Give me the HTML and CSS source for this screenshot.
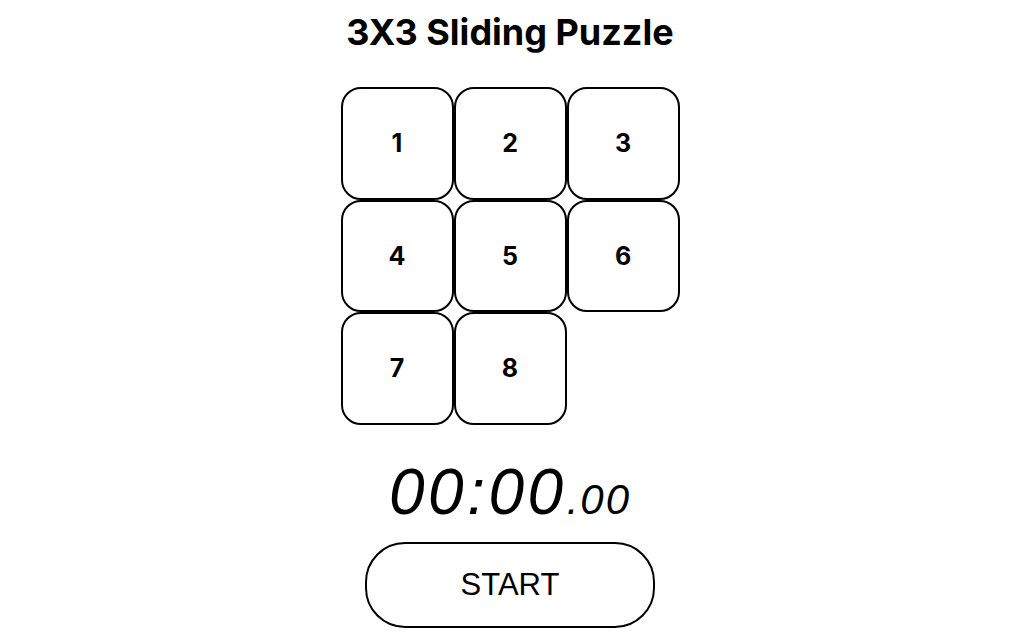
FILE: index.html
```html
<!DOCTYPE html>
<html lang="en">
<head>
<meta charset="utf-8">
<title>3X3 Sliding Puzzle</title>
<link rel="stylesheet" href="styles.css">
</head>
<body>
<main class="app">
  <h1 class="title">3X3 Sliding Puzzle</h1>
  <div class="board">
    <div class="tile">1</div>
    <div class="tile">2</div>
    <div class="tile">3</div>
    <div class="tile">4</div>
    <div class="tile">5</div>
    <div class="tile">6</div>
    <div class="tile">7</div>
    <div class="tile">8</div>
    <div class="slot"></div>
  </div>
  <div class="timer"><span class="timer-main">00:00</span><span class="timer-frac">.00</span></div>
  <button class="start-btn" type="button">START</button>
</main>
</body>
</html>
```

FILE: styles.css
```css
html, body {
  margin: 0;
  padding: 0;
  background: #fff;
  color: #000;
}

.app {
  display: flex;
  flex-direction: column;
  align-items: center;
  padding-top: 8px;
}

.title {
  margin: 0;
  font-family: Inter, "Liberation Sans", sans-serif;
  font-weight: 700;
  font-size: 36px;
  line-height: 48px;
  letter-spacing: 0;
}

.board {
  margin-top: 31px;
  display: grid;
  grid-template-columns: repeat(3, 113px);
  grid-template-rows: repeat(3, 112.5px);
}

.tile {
  box-sizing: border-box;
  border: 2px solid #000;
  border-radius: 20px;
  display: flex;
  align-items: center;
  justify-content: center;
  font-family: Inter, "Liberation Sans", sans-serif;
  font-weight: 700;
  font-size: 25px;
  background: #fff;
}

.timer {
  margin-top: 35px;
  height: 64px;
  font-family: "Liberation Sans", Arial, sans-serif;
  font-style: italic;
  line-height: 64px;
}

.timer-main {
  font-size: 64px;
  letter-spacing: 3.5px;
}

.timer-frac {
  font-size: 42px;
  letter-spacing: 2px;
}

.start-btn {
  margin-top: 18px;
  width: 290px;
  height: 86px;
  box-sizing: border-box;
  border: 2px solid #000;
  border-radius: 40px;
  background: #fff;
  color: #000;
  font-family: "Liberation Sans", Arial, sans-serif;
  font-size: 31px;
  padding: 0;
}
```
